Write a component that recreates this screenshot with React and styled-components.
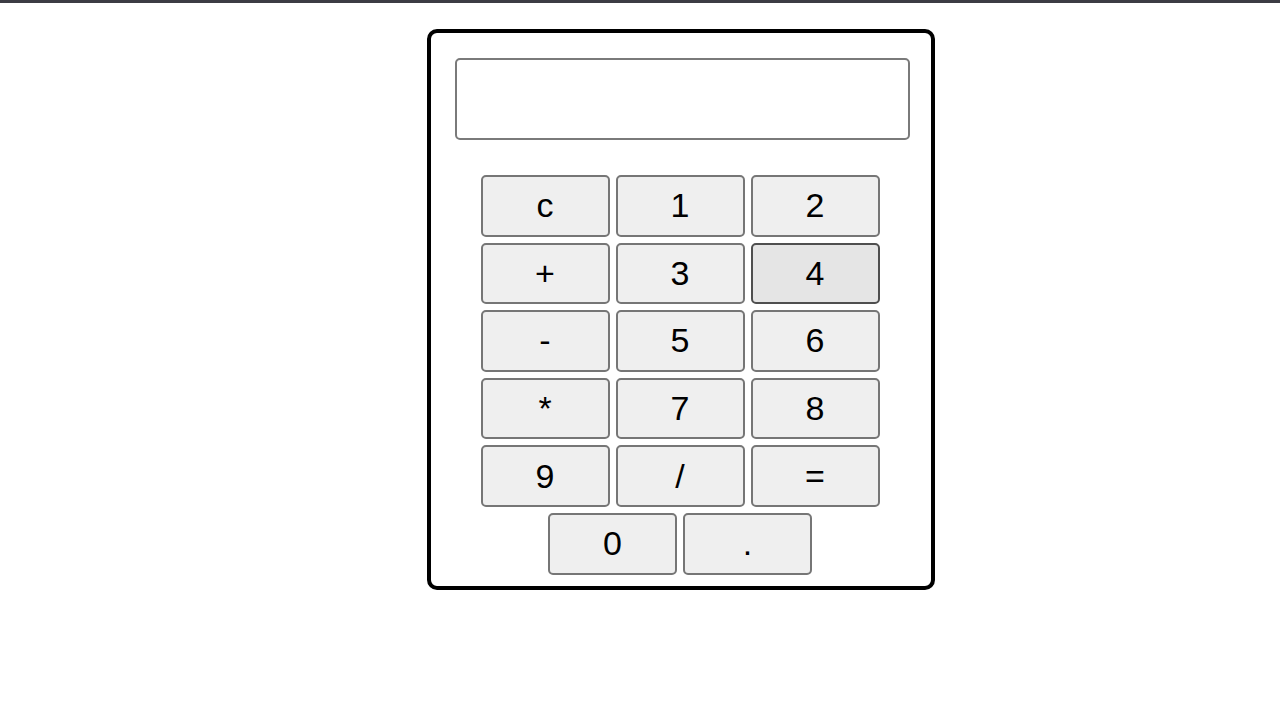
import React from "react";
import styled, { createGlobalStyle } from "styled-components";

const GlobalStyle = createGlobalStyle`
    html, body {
        margin: 0;
        padding: 0;
        background: #ffffff;
        font-family: "Liberation Sans", Arial, sans-serif;
    }
`;

const TopBar = styled.div`
    height: 3px;
    background: #3c3c44;
`;

const Page = styled.main`
    padding: 26px 0 0 427px;
`;

const Calculator = styled.div`
    width: 508px;
    height: 561px;
    box-sizing: border-box;
    border: 4px solid #000;
    border-radius: 10px;
    display: flex;
    flex-direction: column;
    align-items: center;
    padding-top: 25px;
`;

const Display = styled.input`
    width: 455px;
    height: 82px;
    box-sizing: border-box;
    border: 2px solid #7a7a7a;
    border-radius: 5px;
    font-family: inherit;
    font-size: 32px;
    padding: 0 10px;
    outline: none;
    margin: 0 0 35px 3px;
`;

const Keys = styled.div`
    width: 405px;
    margin-right: 2px;
    display: flex;
    flex-wrap: wrap;
    justify-content: center;
    row-gap: 6px;
    column-gap: 6px;
`;

const Key = styled.button`
    width: 129px;
    height: 61.6px;
    box-sizing: border-box;
    border: 2px solid ${(p) => (p.$hover ? "#4f4f4f" : "#767676")};
    border-radius: 5px;
    background: ${(p) => (p.$hover ? "#e5e5e5" : "#efefef")};
    color: #000;
    font-family: "Liberation Sans", Arial, sans-serif;
    font-size: 34px;
    padding: 0;
    cursor: pointer;
    display: flex;
    align-items: center;
    justify-content: center;
`;

const keys = ["c", "1", "2", "+", "3", "4", "-", "5", "6", "*", "7", "8", "9", "/", "=", "0", "."];

const App = () => {
    return (
        <>
            <GlobalStyle />
            <TopBar />
            <Page>
                <Calculator>
                    <Display type="text" readOnly />
                    <Keys>
                        {keys.map((k) => (
                            <Key key={k} $hover={k === "4"}>
                                {k}
                            </Key>
                        ))}
                    </Keys>
                </Calculator>
            </Page>
        </>
    );
};

export default App;
